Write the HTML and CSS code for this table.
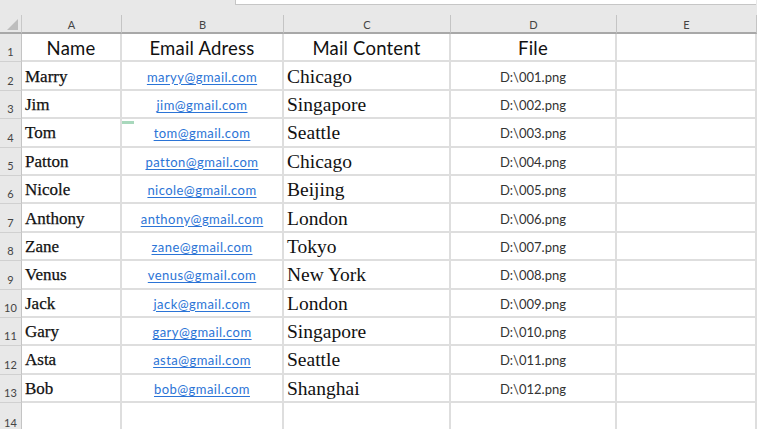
FILE: index.html
```html
<!DOCTYPE html>
<html>
<head>
<meta charset="utf-8">
<link rel="stylesheet" href="styles.css">
</head>
<body>
<div class="sheet">
  <div class="topbar"><div class="fbox"></div></div>
  <div class="grid">
    <div class="corner"><span class="tri"></span></div>
    <div class="ch">A</div><div class="ch">B</div><div class="ch">C</div><div class="ch">D</div><div class="ch">E</div>

    <div class="rh">1</div><div class="c hd">Name</div><div class="c hd">Email Adress</div><div class="c hd">Mail Content</div><div class="c hd">File</div><div class="c"></div>

    <div class="rh">2</div><div class="c nm">Marry</div><div class="c em"><span>maryy@gmail.com</span></div><div class="c ct">Chicago</div><div class="c fl">D:\001.png</div><div class="c"></div>
    <div class="rh">3</div><div class="c nm">Jim</div><div class="c em"><span>jim@gmail.com</span></div><div class="c ct">Singapore</div><div class="c fl">D:\002.png</div><div class="c"></div>
    <div class="rh">4</div><div class="c nm">Tom</div><div class="c em sel"><span>tom@gmail.com</span><i class="mark"></i></div><div class="c ct">Seattle</div><div class="c fl">D:\003.png</div><div class="c"></div>
    <div class="rh">5</div><div class="c nm">Patton</div><div class="c em"><span>patton@gmail.com</span></div><div class="c ct">Chicago</div><div class="c fl">D:\004.png</div><div class="c"></div>
    <div class="rh">6</div><div class="c nm">Nicole</div><div class="c em"><span>nicole@gmail.com</span></div><div class="c ct">Beijing</div><div class="c fl">D:\005.png</div><div class="c"></div>
    <div class="rh">7</div><div class="c nm">Anthony</div><div class="c em"><span>anthony@gmail.com</span></div><div class="c ct">London</div><div class="c fl">D:\006.png</div><div class="c"></div>
    <div class="rh">8</div><div class="c nm">Zane</div><div class="c em"><span>zane@gmail.com</span></div><div class="c ct">Tokyo</div><div class="c fl">D:\007.png</div><div class="c"></div>
    <div class="rh">9</div><div class="c nm">Venus</div><div class="c em"><span>venus@gmail.com</span></div><div class="c ct">New York</div><div class="c fl">D:\008.png</div><div class="c"></div>
    <div class="rh">10</div><div class="c nm">Jack</div><div class="c em"><span>jack@gmail.com</span></div><div class="c ct">London</div><div class="c fl">D:\009.png</div><div class="c"></div>
    <div class="rh">11</div><div class="c nm">Gary</div><div class="c em"><span>gary@gmail.com</span></div><div class="c ct">Singapore</div><div class="c fl">D:\010.png</div><div class="c"></div>
    <div class="rh">12</div><div class="c nm">Asta</div><div class="c em"><span>asta@gmail.com</span></div><div class="c ct">Seattle</div><div class="c fl">D:\011.png</div><div class="c"></div>
    <div class="rh">13</div><div class="c nm">Bob</div><div class="c em"><span>bob@gmail.com</span></div><div class="c ct">Shanghai</div><div class="c fl">D:\012.png</div><div class="c"></div>
    <div class="rh">14</div><div class="c"></div><div class="c"></div><div class="c"></div><div class="c"></div><div class="c"></div>
  </div>
</div>
</body>
</html>
```
FILE: styles.css
```css
* { box-sizing: border-box; }
html, body { margin: 0; padding: 0; background: #ffffff; }
body { width: 768px; height: 429px; overflow: hidden; }

.sheet { width: 757px; }

.topbar {
  height: 15px;
  background: #e8e8e8;
  position: relative;
}
.fbox {
  position: absolute;
  left: 235px;
  top: 0;
  width: 521px;
  height: 5px;
  background: #ffffff;
  border-left: 1px solid #c6c6c6;
  border-bottom: 1px solid #c6c6c6;
}

.grid {
  display: grid;
  grid-template-columns: 22px 100px 162px 167px 166px 140px;
  grid-template-rows: 19px repeat(13, 28.4px) 30px;
}

.corner {
  background: #e8e8e8;
  border-right: 1px solid #c8c8c8;
  border-bottom: 2px solid #a8a8a8;
  position: relative;
}
.tri {
  position: absolute;
  right: 3px;
  bottom: 2px;
  width: 0;
  height: 0;
  border-left: 11px solid transparent;
  border-bottom: 11px solid #bdbdbd;
}

.ch {
  background: #e8e8e8;
  border-right: 1px solid #c4c4c4;
  border-bottom: 2px solid #a8a8a8;
  font-family: "Lato", "Liberation Sans", sans-serif;
  font-size: 11px;
  color: #444444;
  display: flex;
  align-items: center;
  justify-content: center;
  padding-top: 1px;
}

.rh {
  background: #e8e8e8;
  border-right: 1px solid #c4c4c4;
  border-bottom: 1px solid #d0d0d0;
  font-family: "Lato", "Liberation Sans", sans-serif;
  font-size: 11px;
  color: #444444;
  display: flex;
  align-items: flex-end;
  justify-content: center;
  padding-bottom: 3px;
}

.c {
  border-right: 2px solid #dedede;
  border-bottom: 2px solid #dedede;
  display: flex;
  align-items: center;
  white-space: nowrap;
  overflow: hidden;
  position: relative;
}

.hd {
  justify-content: center;
  font-family: "Lato", "Liberation Sans", sans-serif;
  font-size: 18.5px;
  color: #111111;
  padding-top: 2px;
  letter-spacing: 0.2px;
}

.nm {
  font-family: "Liberation Serif", "Times New Roman", serif;
  font-size: 17px;
  color: #111111;
  padding-left: 3px;
  padding-top: 2px;
  -webkit-text-stroke: 0.25px #111;
}

.ct {
  font-family: "Liberation Serif", "Times New Roman", serif;
  font-size: 19.5px;
  color: #111111;
  padding-left: 3px;
  padding-top: 2px;
}

.em {
  justify-content: center;
  font-family: "Lato", "Liberation Sans", sans-serif;
  font-size: 13px;
  letter-spacing: 0.45px;
  color: #2b74d6;
  padding-top: 2px;
}
.em span {
  text-decoration: underline;
  text-underline-offset: 2px;
}

.fl {
  justify-content: center;
  font-family: "Lato", "Liberation Sans", sans-serif;
  font-size: 13px;
  color: #333333;
  padding-top: 2px;
}

.mark {
  position: absolute;
  left: 0;
  top: 2px;
  width: 12px;
  height: 3px;
  background: #a8d8bc;
}
```
